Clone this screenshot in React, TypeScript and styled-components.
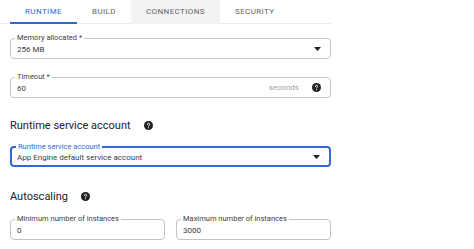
import styled, { createGlobalStyle } from "styled-components";

const GlobalStyle = createGlobalStyle`
  body {
    margin: 0;
    background: #ffffff;
    font-family: Roboto, "Liberation Sans", sans-serif;
    color: #202124;
  }
`;

const HelpIcon = () => (
  <svg width="9" height="9" viewBox="0 0 24 24">
    <circle cx="12" cy="12" r="12" fill="#202124" />
    <path
      d="M9 9.2a3 3 0 0 1 6 0c0 2-3 2.3-3 4.6"
      fill="none"
      stroke="#fff"
      strokeWidth="2.6"
      strokeLinecap="round"
    />
    <circle cx="12" cy="18" r="1.6" fill="#fff" />
  </svg>
);

const Arrow = () => (
  <svg width="7" height="4" viewBox="0 0 7 4">
    <path d="M0 0h7L3.5 4z" fill="#202124" />
  </svg>
);

const tabs = ["Runtime", "Build", "Connections", "Security"];

export default function App() {
  return (
    <>
      <GlobalStyle />
      <Page>
        <TabBar>
          {tabs.map((t, i) => (
            <Tab key={t} $active={i === 0} $hover={i === 2}>
              {t}
            </Tab>
          ))}
        </TabBar>

        <Field $top={14}>
          <Label>Memory allocated *</Label>
          <Value>256 MB</Value>
          <Trail>
            <Arrow />
          </Trail>
        </Field>

        <Field $top={18}>
          <Label>Timeout *</Label>
          <Value>60</Value>
          <Trail>
            <Suffix>seconds</Suffix>
            <HelpIcon />
          </Trail>
        </Field>

        <Heading $top={20}>
          Runtime service account
          <HelpIcon />
        </Heading>

        <Field $top={13} $focused>
          <Label $focused>Runtime service account</Label>
          <Value>App Engine default service account</Value>
          <Trail>
            <Arrow />
          </Trail>
        </Field>

        <Heading $top={22}>
          Autoscaling
          <HelpIcon />
        </Heading>

        <Pair>
          <Field $top={0}>
            <Label>Minimum number of instances</Label>
            <Value>0</Value>
          </Field>
          <Field $top={0}>
            <Label>Maximum number of instances</Label>
            <Value>3000</Value>
          </Field>
        </Pair>
      </Page>
    </>
  );
}

const Page = styled.div`
  width: 321px;
  padding: 0 0 0 10px;
`;

const TabBar = styled.div`
  display: flex;
  height: 23px;
  margin-left: -10px;
  padding-left: 10px;
  border-bottom: 1px solid #e8eaed;
`;

const Tab = styled.div<{ $active?: boolean; $hover?: boolean }>`
  display: flex;
  align-items: center;
  padding: 0 15px;
  font-size: 8px;
  font-weight: 400;
  letter-spacing: 0.4px;
  text-transform: uppercase;
  color: ${(p) => (p.$active ? "#3367d6" : "#5f6368")};
  background: ${(p) => (p.$hover ? "#f3f3f3" : "transparent")};
  border-bottom: 2px solid ${(p) => (p.$active ? "#3367d6" : "transparent")};
  box-sizing: border-box;
  height: 24px;
`;

const Field = styled.div<{ $top: number; $focused?: boolean }>`
  position: relative;
  display: flex;
  align-items: center;
  height: 21px;
  box-sizing: border-box;
  margin-top: ${(p) => p.$top}px;
  padding: 0 9px 0 ${(p) => (p.$focused ? 5 : 6)}px;
  border: ${(p) => (p.$focused ? "2px solid #3367d6" : "1px solid #c4c4c4")};
  border-radius: 4px;
  flex: 1;
`;

const Label = styled.span<{ $focused?: boolean }>`
  position: absolute;
  top: -6px;
  left: 4px;
  padding: 0 2px;
  background: #ffffff;
  font-size: 7.5px;
  line-height: 10px;
  color: ${(p) => (p.$focused ? "#3367d6" : "#3c4043")};
`;

const Value = styled.span`
  flex: 1;
  font-size: 8px;
  padding-top: 2px;
  color: #3c4043;
`;

const Trail = styled.span`
  display: flex;
  align-items: center;
  gap: 13px;
`;

const Suffix = styled.span`
  font-size: 8px;
  color: #9aa0a6;
`;

const Heading = styled.div<{ $top: number }>`
  display: flex;
  align-items: center;
  gap: 13px;
  margin-top: ${(p) => p.$top}px;
  font-size: 11px;
  line-height: 15px;
  color: #202124;
`;

const Pair = styled.div`
  display: flex;
  gap: 11px;
  margin-top: 15px;
`;
